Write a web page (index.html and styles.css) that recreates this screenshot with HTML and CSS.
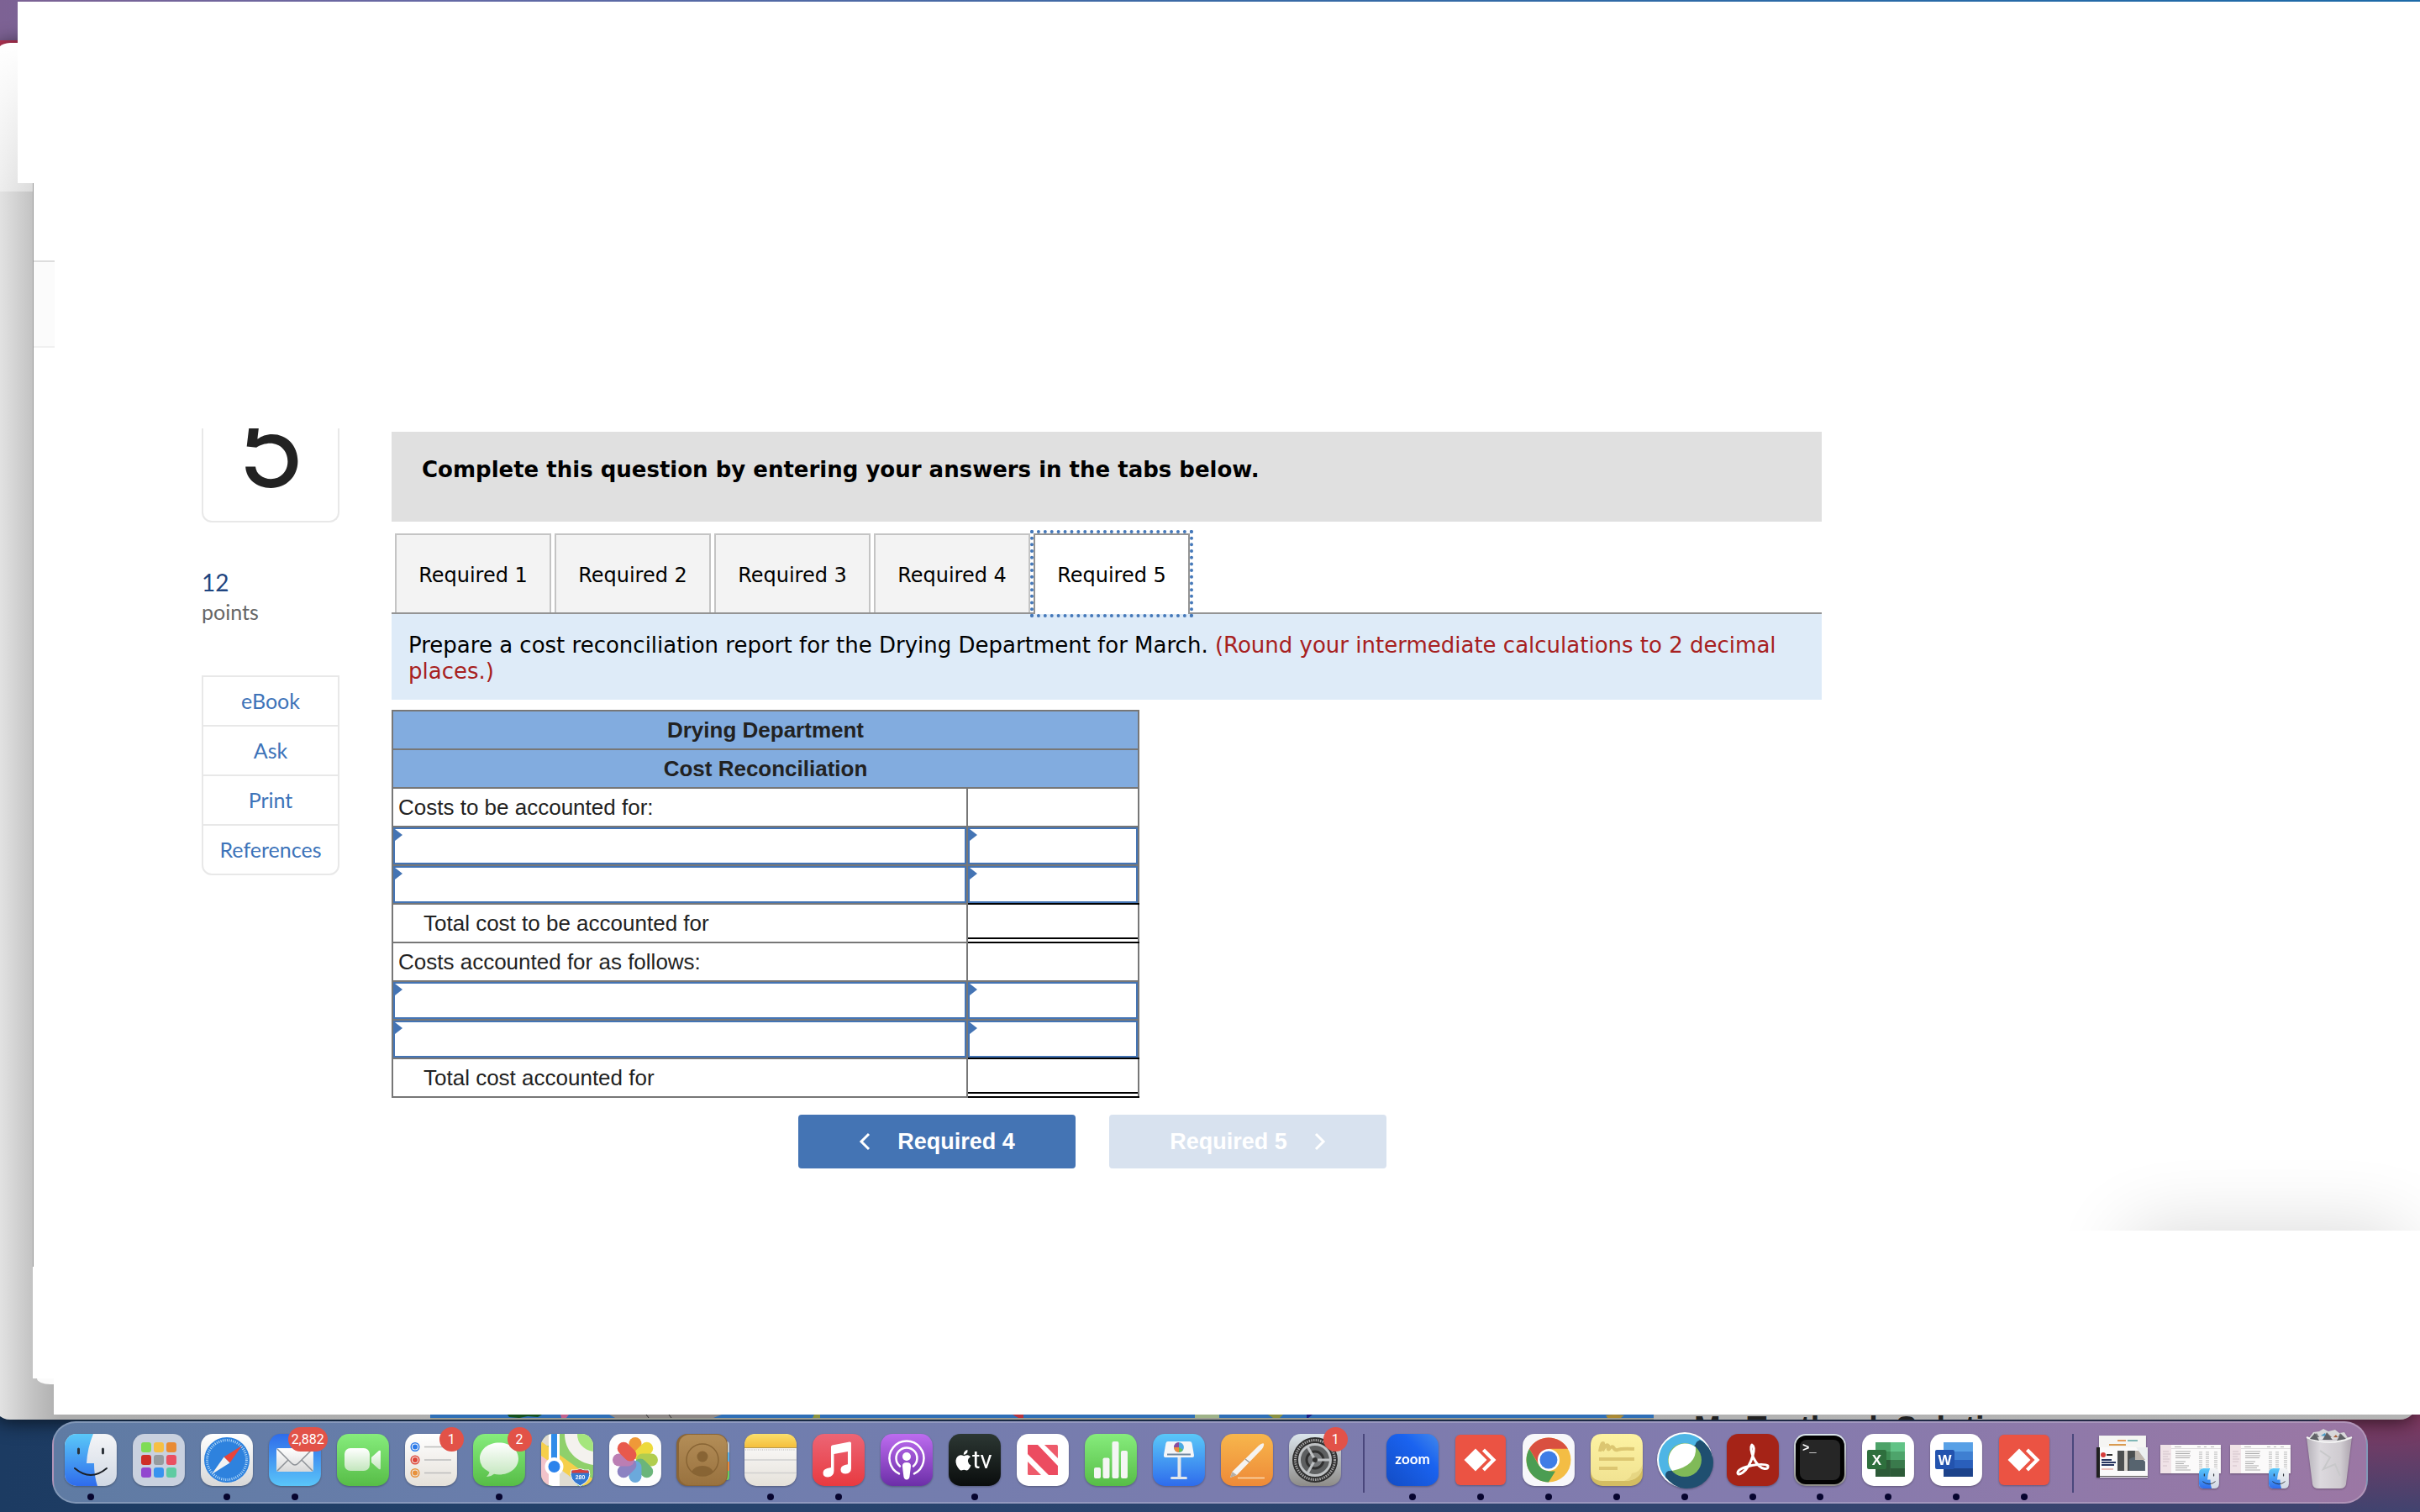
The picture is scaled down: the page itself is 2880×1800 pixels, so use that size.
FILE: index.html
```html
<!DOCTYPE html>
<html lang="en">
<head>
  <meta charset="UTF-8">
  <meta name="viewport" content="width=device-width, initial-scale=1.0">
  <title>Cost Reconciliation - Drying Department</title>
  <link rel="stylesheet" href="styles.css">
</head>
<body>
  <!-- shared gradients and icons -->
  <svg class="defs" width="0" height="0" aria-hidden="true">
    <defs>
      <linearGradient id="g-blue" x1="0" y1="0" x2="0" y2="1"><stop offset="0" stop-color="#5ac8f8"/><stop offset="1" stop-color="#2f6cec"/></linearGradient>
      <linearGradient id="g-mail" x1="0" y1="0" x2="0" y2="1"><stop offset="0" stop-color="#2f6cea"/><stop offset="1" stop-color="#5ac5f9"/></linearGradient>
      <linearGradient id="g-grey" x1="0" y1="0" x2="0" y2="1"><stop offset="0" stop-color="#f4f5f7"/><stop offset="1" stop-color="#d0d8e4"/></linearGradient>
      <linearGradient id="g-white" x1="0" y1="0" x2="0" y2="1"><stop offset="0" stop-color="#ffffff"/><stop offset="1" stop-color="#d8d8d8"/></linearGradient>
      <linearGradient id="g-green" x1="0" y1="0" x2="0" y2="1"><stop offset="0" stop-color="#86ec7c"/><stop offset="1" stop-color="#57bd47"/></linearGradient>
      <linearGradient id="g-bubble" x1="0" y1="0" x2="0" y2="1"><stop offset="0" stop-color="#ffffff"/><stop offset="1" stop-color="#c3e6bd"/></linearGradient>
      <linearGradient id="g-paper" x1="0" y1="0" x2="0" y2="1"><stop offset="0" stop-color="#ffffff"/><stop offset="1" stop-color="#e5e1da"/></linearGradient>
      <linearGradient id="g-yellow" x1="0" y1="0" x2="0" y2="1"><stop offset="0" stop-color="#fbdf6b"/><stop offset="1" stop-color="#f5bf3c"/></linearGradient>
      <linearGradient id="g-music" x1="0" y1="0" x2="0" y2="1"><stop offset="0" stop-color="#ec6575"/><stop offset="1" stop-color="#e83a40"/></linearGradient>
      <linearGradient id="g-pod" x1="0" y1="0" x2="0" y2="1"><stop offset="0" stop-color="#bd6cef"/><stop offset="1" stop-color="#6c2fa8"/></linearGradient>
      <linearGradient id="g-tv" x1="0" y1="0" x2="0" y2="1"><stop offset="0" stop-color="#2c3733"/><stop offset="1" stop-color="#0a0d0d"/></linearGradient>
      <linearGradient id="g-pages" x1="0" y1="0" x2="0" y2="1"><stop offset="0" stop-color="#f7b64c"/><stop offset="1" stop-color="#ee8a38"/></linearGradient>
      <linearGradient id="g-gear" x1="0" y1="0" x2="0" y2="1"><stop offset="0" stop-color="#dbe5ec"/><stop offset="1" stop-color="#8e8c89"/></linearGradient>
      <linearGradient id="g-zoom" x1="1" y1="0" x2="0" y2="1"><stop offset="0" stop-color="#4388ea"/><stop offset=".35" stop-color="#1a63f0"/><stop offset="1" stop-color="#124cc4"/></linearGradient>
      <linearGradient id="g-note" x1="0" y1="0" x2="0" y2="1"><stop offset="0" stop-color="#fdf2a2"/><stop offset="1" stop-color="#f1e392"/></linearGradient>
      <linearGradient id="g-book" x1="0" y1="0" x2="0" y2="1"><stop offset="0" stop-color="#b38d57"/><stop offset="1" stop-color="#99723f"/></linearGradient>
      <linearGradient id="g-can" x1="0" y1="0" x2="1" y2="0"><stop offset="0" stop-color="#bdbcc0"/><stop offset=".3" stop-color="#e8e8e9"/><stop offset=".75" stop-color="#dad9da"/><stop offset="1" stop-color="#b3adb4"/></linearGradient>
      <clipPath id="tile"><rect width="62" height="62" rx="14"/></clipPath>
    </defs>
    <symbol id="finder" viewBox="0 0 62 62">
      <g clip-path="url(#tile)">
        <rect width="62" height="62" fill="url(#g-grey)"/>
        <path d="M0 0H34Q27 17 26 35H35Q35 50 39 62H0Z" fill="url(#g-blue)"/>
      </g>
      <path d="M16.500 18v5M45.500 18v5" stroke="#2b3138" stroke-width="3" stroke-linecap="round"/>
      <path d="M12 41Q31 57 50 41" fill="none" stroke="#1b1f25" stroke-width="2" stroke-linecap="round"/>
    </symbol>
    <symbol id="anydesk" viewBox="0 0 62 62">
      <rect x="1" y="1" width="60" height="60" rx="6" fill="#eb5343"/>
      <path d="M11.500 31 25 17.500 38.500 31 25 44.500Z" fill="#fff"/>
      <path d="M33 20.500 36 17.500 49.500 31 36 44.500 33 41.500 43.500 31Z" fill="#fff"/>
    </symbol>
    <symbol id="listing" viewBox="0 0 72 34">
      <rect width="72" height="34" fill="#fbfafa"/>
      <rect width="13" height="34" fill="#f0e3e7"/>
      <path d="M3 8h7M3 11h9M3 14h6M3 17h8M3 20h7M3 25h5" stroke="#d3c3ca"/>
      <path d="M17 2.500h8M44 2.500h4M52 2.500h3M60 2.500h4" stroke="#b8b5b8"/>
      <path d="M13 4.500h59" stroke="#dedcdd"/>
      <path d="M18 8h18M18 10.500h17M18 13h18M18 15.500h17M18 20h12M18 22.500h10M18 25h16M18 27.500h14M18 30h18" stroke="#adadad"/>
      <path d="M48 8v23M56 8v23M66 8v23" stroke="#d0d0d0" stroke-width="4" stroke-dasharray="1.500 1"/>
    </symbol>
  </svg>

  <main class="screen">
    <div class="sheet-top"></div>

    <div class="sheet-body">
      <div class="toolbar-stub"></div>

      <div class="content">
        <aside class="side">
          <div class="question-number">5</div>
          <div class="points"><span class="points-value">12</span><span class="points-label">points</span></div>
          <nav class="side-menu">
            <a href="#ebook">eBook</a>
            <a href="#ask">Ask</a>
            <a href="#print">Print</a>
            <a href="#references">References</a>
          </nav>
        </aside>

        <section class="question">
          <h1 class="banner">Complete this question by entering your answers in the tabs below.</h1>

          <div class="tabs" role="tablist">
            <button class="tab" role="tab">Required 1</button>
            <button class="tab" role="tab">Required 2</button>
            <button class="tab" role="tab">Required 3</button>
            <button class="tab" role="tab">Required 4</button>
            <button class="tab active" role="tab" aria-selected="true">Required 5</button>
          </div>

          <p class="instruction">Prepare a cost reconciliation report for the Drying Department for March. <span class="hint">(Round your intermediate calculations to 2 decimal places.)</span></p>

          <table class="report">
            <thead>
              <tr><th colspan="2">Drying Department</th></tr>
              <tr><th colspan="2">Cost Reconciliation</th></tr>
            </thead>
            <tbody>
              <tr><td class="label">Costs to be accounted for:</td><td class="amount"></td></tr>
              <tr>
                <td class="entry"><input type="text" aria-label="Cost item 1"></td>
                <td class="entry"><input type="text" aria-label="Cost amount 1"></td>
              </tr>
              <tr>
                <td class="entry"><input type="text" aria-label="Cost item 2"></td>
                <td class="entry last"><input type="text" aria-label="Cost amount 2"></td>
              </tr>
              <tr><td class="label indent">Total cost to be accounted for</td><td class="amount total"></td></tr>
              <tr><td class="label">Costs accounted for as follows:</td><td class="amount"></td></tr>
              <tr>
                <td class="entry"><input type="text" aria-label="Accounted item 1"></td>
                <td class="entry"><input type="text" aria-label="Accounted amount 1"></td>
              </tr>
              <tr>
                <td class="entry"><input type="text" aria-label="Accounted item 2"></td>
                <td class="entry last"><input type="text" aria-label="Accounted amount 2"></td>
              </tr>
              <tr><td class="label indent">Total cost accounted for</td><td class="amount total"></td></tr>
            </tbody>
          </table>

          <div class="pager">
            <button class="pager-button">
              <svg width="14" height="22" viewBox="0 0 14 22"><path d="M12 2 3 11l9 9" fill="none" stroke="currentColor" stroke-width="3"/></svg>
              Required 4
            </button>
            <button class="pager-button" disabled>
              Required 5
              <svg width="14" height="22" viewBox="0 0 14 22"><path d="m2 2 9 9-9 9" fill="none" stroke="currentColor" stroke-width="3"/></svg>
            </button>
          </div>
        </section>
      </div>

      <div class="popup-shadow"></div>
    </div>

    <div class="sheet-rest"></div>
    <div class="sheet-foot"></div>

    <!-- last visible pixels of the window behind -->
    <div class="peek">
      <svg class="peek-art" viewBox="0 0 1456 6" preserveAspectRatio="none">
        <rect width="1456" height="6" fill="#2f6fb6"/>
        <path d="M92 0h41l-5 3-12-1-10 2-12-1Z" fill="#14501b"/>
        <path d="M155 0h10l-3 4h-6Z" fill="#c2618b"/>
        <path d="M213 0h134l-10 4H220Z" fill="#8d8886"/>
        <path d="M257 0l3 4M284 0l3 4" stroke="#333"/>
        <path d="M457 0h7v4h-9Z" fill="#8c9440"/>
        <path d="M693 0h13v4h-6Z" fill="#b9323c"/>
        <path d="M910 0h29v4h-29Z" fill="#9fb389"/>
        <path d="M997 0h18l-4 4h-8Z" fill="#8a9140"/>
        <path d="M1043 0h7l-5 4h-2Z" fill="#1b1f86"/>
        <path d="M1399 1q10-2 22 0l-4 3h-16Z" fill="#ac8a34"/>
        <rect y="4" width="1456" height="2" fill="#9b9c92"/>
      </svg>
      <span class="peek-text">My Textbook Solutions</span>
    </div>
  </main>

  <footer class="dock">
    <button class="app running" aria-label="Finder"><svg viewBox="0 0 62 62"><use href="#finder"/></svg></button>
    <button class="app" aria-label="Launchpad">
      <svg viewBox="0 0 62 62">
        <rect width="62" height="62" rx="14" fill="#c9d1df"/>
        <g>
          <rect x="10" y="10" width="12" height="12" rx="3" fill="#7fdc55"/><rect x="25" y="10" width="12" height="12" rx="3" fill="#f6c044"/><rect x="40" y="10" width="12" height="12" rx="3" fill="#e98b34"/>
          <rect x="10" y="25" width="12" height="12" rx="3" fill="#cf2f27"/><rect x="25" y="25" width="12" height="12" rx="3" fill="#959b9f"/><rect x="40" y="25" width="12" height="12" rx="3" fill="#ea4f61"/>
          <rect x="10" y="40" width="12" height="12" rx="3" fill="#9247cf"/><rect x="25" y="40" width="12" height="12" rx="3" fill="#3893ef"/><rect x="40" y="40" width="12" height="12" rx="3" fill="#5fcba2"/>
        </g>
      </svg>
    </button>
    <button class="app running" aria-label="Safari">
      <svg viewBox="0 0 62 62">
        <rect width="62" height="62" rx="14" fill="url(#g-white)"/>
        <circle cx="31" cy="31" r="27" fill="#2e82de"/>
        <circle cx="31" cy="31" r="23.500" fill="none" stroke="#b9dcf8" stroke-width="3" stroke-dasharray="1 1.500"/>
        <path d="M49 14 34.500 34.500 27.500 27.500Z" fill="#e8443a"/>
        <path d="M13 48 27.500 27.500 34.500 34.500Z" fill="#f3f3f3"/>
      </svg>
    </button>
    <button class="app running" aria-label="Mail">
      <svg viewBox="0 0 62 62">
        <rect width="62" height="62" rx="14" fill="url(#g-mail)"/>
        <rect x="9" y="17" width="44" height="28" rx="2" fill="url(#g-white)"/>
        <path d="m10 18 17 17q4 4 8 0l17-17M10 44l13-13M52 44 39 31" fill="none" stroke="#8d9196" stroke-width="1.500"/>
      </svg>
      <span class="badge">2,882</span>
    </button>
    <button class="app" aria-label="FaceTime">
      <svg viewBox="0 0 62 62">
        <rect width="62" height="62" rx="14" fill="url(#g-green)"/>
        <rect x="9" y="17" width="30" height="27" rx="7" fill="url(#g-bubble)"/>
        <path d="m41 28 9-8q2-1 2 1v20q0 2-2 1l-9-8Z" fill="url(#g-bubble)"/>
      </svg>
    </button>
    <button class="app" aria-label="Reminders">
      <svg viewBox="0 0 62 62">
        <rect width="62" height="62" rx="14" fill="url(#g-paper)"/>
        <g stroke-width="1.500">
          <circle cx="12" cy="15.500" r="4.800" fill="none" stroke="#2c7bea"/><circle cx="12" cy="15.500" r="3" fill="#2c7bea"/>
          <circle cx="12" cy="31" r="4.800" fill="none" stroke="#de4438"/><circle cx="12" cy="31" r="3" fill="#de4438"/>
          <circle cx="12" cy="46.500" r="4.800" fill="none" stroke="#e8913a"/><circle cx="12" cy="46.500" r="3" fill="#e8913a"/>
        </g>
        <path d="M23 15.500h32M23 31h32M23 46.500h32" stroke="#bdbdbd" stroke-width="1.500"/>
      </svg>
      <span class="badge">1</span>
    </button>
    <button class="app running" aria-label="Messages">
      <svg viewBox="0 0 62 62">
        <rect width="62" height="62" rx="14" fill="url(#g-green)"/>
        <path d="M31 10.500c13 0 23 8 23 19s-10 19-23 19q-3 0-6-.700-4 3.500-9 3.200 3-2.500 3.500-5.500Q8 40 8 29.500c0-11 10-19 23-19Z" fill="url(#g-bubble)"/>
      </svg>
      <span class="badge">2</span>
    </button>
    <button class="app" aria-label="Maps">
      <svg viewBox="0 0 62 62">
        <g clip-path="url(#tile)">
          <rect width="62" height="62" fill="#8fd06b"/>
          <rect width="9" height="14" fill="#dedad2"/>
          <path d="M0 26h10v36H0Z" fill="#f2c3ca"/>
          <path d="M22 36 44 62H22Z" fill="#dfdcd2"/>
          <path d="m0 9 62 45v12h-6L0 26Z" fill="#f6cf4b"/>
          <path d="M28 0h34v37C42 34 28 20 28 0Z" fill="#f4f2ee"/>
          <path d="M43 0h19v21C50 19 43 11 43 0Z" fill="#a5e67d"/>
          <path d="M9 0h13v62H9Z" fill="#fff"/>
          <path d="M12 0h7v38h-7Z" fill="#2f8ce9"/>
        </g>
        <circle cx="15.500" cy="39" r="9" fill="#2b83ec" stroke="#fff" stroke-width="4"/>
        <path d="M36 43q5 1 10.500-1.500Q52 44 57 43q4 12-10.500 19Q32 55 36 43Z" fill="#3578d0" stroke="#fff" stroke-width="1"/>
        <path d="M37 43.500q5 0 9.500-1.500 5 2 9.500 1.500l1 3H36Z" fill="#d9403c"/>
        <text x="46.500" y="54" text-anchor="middle" class="icon-shield">280</text>
      </svg>
    </button>
    <button class="app" aria-label="Photos">
      <svg viewBox="0 0 62 62">
        <rect width="62" height="62" rx="14" fill="#fdfdfd"/>
        <g class="petals">
          <rect x="23.500" y="4" width="15" height="26" rx="7.500" fill="#f19a38"/>
          <rect x="23.500" y="4" width="15" height="26" rx="7.500" fill="#efdc3c" transform="rotate(45 31 31)"/>
          <rect x="23.500" y="4" width="15" height="26" rx="7.500" fill="#b3cf4f" transform="rotate(90 31 31)"/>
          <rect x="23.500" y="4" width="15" height="26" rx="7.500" fill="#6cb77b" transform="rotate(135 31 31)"/>
          <rect x="23.500" y="4" width="15" height="26" rx="7.500" fill="#6cabdd" transform="rotate(180 31 31)"/>
          <rect x="23.500" y="4" width="15" height="26" rx="7.500" fill="#8d83c4" transform="rotate(225 31 31)"/>
          <rect x="23.500" y="4" width="15" height="26" rx="7.500" fill="#bd7fb5" transform="rotate(270 31 31)"/>
          <rect x="23.500" y="4" width="15" height="26" rx="7.500" fill="#ea5a4c" transform="rotate(315 31 31)"/>
        </g>
      </svg>
    </button>
    <button class="app" aria-label="Contacts">
      <svg viewBox="0 0 62 62">
        <path d="M58 9h3q2 1 2 4v10h-5Z" fill="#c7cdd0"/><path d="M58 22h5v11h-5Z" fill="#56b3ec"/><path d="M58 33h5v11h-5Z" fill="#ef8c37"/><path d="M58 44h5v8q0 3-3 3h-2Z" fill="#6dd05c"/>
        <rect width="61" height="62" rx="13" fill="#8a6536"/>
        <rect x="3" y="1" width="57" height="60" rx="12" fill="url(#g-book)"/>
        <circle cx="31" cy="31" r="19" fill="none" stroke="#886434" stroke-width="1.500"/>
        <circle cx="31" cy="27" r="6.500" fill="#886434"/>
        <path d="M18 45q4-7 13-7t13 7q-5 5-13 5t-13-5Z" fill="#886434"/>
      </svg>
    </button>
    <button class="app running" aria-label="Notes">
      <svg viewBox="0 0 62 62">
        <rect width="62" height="62" rx="14" fill="url(#g-paper)"/>
        <path d="M0 16V14Q0 0 14 0h34q14 0 14 14v2Z" fill="url(#g-yellow)"/>
        <path d="M0 16.500h62" stroke="#b79a50"/>
        <path d="M1 19h60" stroke="#b4b4b4" stroke-dasharray="1 1.500"/>
        <path d="M0 31h62M0 46.500h62" stroke="#cfcfcf" stroke-width="1.500"/>
      </svg>
    </button>
    <button class="app running" aria-label="Music">
      <svg viewBox="0 0 62 62">
        <rect width="62" height="62" rx="14" fill="url(#g-music)"/>
        <path d="M22 15.500q0-1.500 1.500-2L44 9.500q2-.300 2 1.500v30q0 6-6.500 6.500-6 0-6-5 0-4 5-5.500l3.500-.800V21L25.500 24v20q0 6.500-7 7.500-6 0-6-5 0-4 5-5.500l4.500-1Z" fill="#fff"/>
      </svg>
    </button>
    <button class="app" aria-label="Podcasts">
      <svg viewBox="0 0 62 62">
        <rect width="62" height="62" rx="14" fill="url(#g-pod)"/>
        <g fill="none" stroke="#fff" stroke-width="2.500" stroke-linecap="round">
          <path d="M22 47.500a20.500 20.500 0 1 1 18 0"/>
          <path d="M23 38.500a12.500 12.500 0 1 1 16 0"/>
        </g>
        <circle cx="31" cy="27" r="5" fill="#fff"/>
        <path d="M31 34q5.500 0 5 5l-1.500 12q-.500 3.500-3.500 3.500t-3.500-3.500L26 39q-.500-5 5-5Z" fill="#fff"/>
      </svg>
    </button>
    <button class="app running" aria-label="TV">
      <svg viewBox="0 0 62 62">
        <rect width="62" height="62" rx="14" fill="url(#g-tv)"/>
        <path d="M22.500 19q.500 3-1.500 4.500-1.500 1.500-3.300 1.300 0-2.500 1.500-4 1.500-1.600 3.300-1.800ZM26 27.500q-3.500 2-3 5.500.500 3 3.500 4.500-1 3-3 5-1.500 1.500-3 .800-2.300-1-4.600 0-1.600.700-3-.800-5-5.500-4.400-11Q9.500 26 14 25.200q1.500-.200 4.300 1 2.500-1.200 4.500-1 2 .300 3.200 2.300Z" fill="#fff"/>
        <text x="28" y="41" class="icon-tv">tv</text>
      </svg>
    </button>
    <button class="app" aria-label="News">
      <svg viewBox="0 0 62 62">
        <rect width="62" height="62" rx="14" fill="#fff"/>
        <path d="M13 13h12L49 38v11H38L13 24Z" fill="#ec4c60"/>
        <path d="M33 13h14.500q1.500 0 1.500 1.500V29Z" fill="#ee5b6b"/>
        <path d="M13 33v14.500q0 1.500 1.500 1.500H29Z" fill="#ee5b6b"/>
      </svg>
    </button>
    <button class="app" aria-label="Numbers">
      <svg viewBox="0 0 62 62">
        <rect width="62" height="62" rx="14" fill="url(#g-green)"/>
        <g fill="#f4f6f4"><rect x="11" y="40" width="8" height="13" rx="2"/><rect x="21.500" y="28.500" width="8" height="24.500" rx="2"/><rect x="32.500" y="9" width="8" height="44" rx="2"/><rect x="43" y="20" width="8" height="33" rx="2"/></g>
      </svg>
    </button>
    <button class="app" aria-label="Keynote">
      <svg viewBox="0 0 62 62">
        <rect width="62" height="62" rx="14" fill="url(#g-blue)"/>
        <rect x="29.500" y="28" width="4" height="24" fill="#e2e6ea"/>
        <path d="M18 9h26q2 0 2.500 2L49 25q.400 3-2 3H15q-2.500 0-2-3l2.500-14q.500-2 2.500-2Z" fill="#f5f6f8"/>
        <path d="M17 24.500h28" stroke="#70879f" stroke-width="2"/>
        <circle cx="31" cy="16" r="6" fill="#4aaae4"/><path d="M31 16v-6a6 6 0 0 0-6 6Z" fill="#8e4b9c"/><path d="M31 16h-6a6 6 0 0 0 6 6Z" fill="#ec8b3a"/><path d="M31 16v6a6 6 0 0 0 5-3Z" fill="#67bd58"/>
        <rect x="21" y="51" width="20" height="3" rx="1.500" fill="#e2e6ea"/>
      </svg>
    </button>
    <button class="app" aria-label="Pages">
      <svg viewBox="0 0 62 62">
        <rect width="62" height="62" rx="14" fill="url(#g-pages)"/>
        <path d="M11 52 13.500 45 45 14q4-3.500 6-2.500 1 2-2 6.500L19 49Z" fill="#f5f3f0"/>
        <path d="m29 30 5 4" stroke="#a09b95" stroke-width="1.500"/>
        <path d="m11 52 2.500-7 5.500 4Z" fill="#b7aea4"/>
        <path d="M20 52.500h32" stroke="#fbd9af" stroke-width="1.500"/>
      </svg>
    </button>
    <button class="app" aria-label="System Preferences">
      <svg viewBox="0 0 62 62">
        <rect width="62" height="62" rx="14" fill="url(#g-gear)"/>
        <circle cx="31" cy="31" r="27" fill="#303030"/>
        <circle cx="31" cy="31" r="23.500" fill="none" stroke="#a5a5a5" stroke-width="3" stroke-dasharray="1.500 1.200"/>
        <circle cx="31" cy="31" r="18.500" fill="#5d5f60" stroke="#bfc2c4" stroke-width="3"/>
        <circle cx="31" cy="31" r="10" fill="#747678" stroke="#303030" stroke-width="3"/>
        <path d="M31 31h18M31 31 22 15M31 31l-9 16" stroke="#bfc2c4" stroke-width="3"/>
        <circle cx="31" cy="31" r="3" fill="#303030"/>
      </svg>
      <span class="badge">1</span>
    </button>

    <span class="divider"></span>

    <button class="app running" aria-label="Zoom">
      <svg viewBox="0 0 62 62"><rect width="62" height="62" rx="14" fill="url(#g-zoom)"/><text x="31" y="36" text-anchor="middle" class="icon-zoom">zoom</text></svg>
    </button>
    <button class="app running" aria-label="AnyDesk"><svg viewBox="0 0 62 62"><use href="#anydesk"/></svg></button>
    <button class="app running" aria-label="Chrome">
      <svg viewBox="0 0 62 62">
        <rect width="62" height="62" rx="14" fill="#f7f7fa"/>
        <circle cx="31" cy="31" r="26.500" fill="#f4bd44"/>
        <path d="M8 17.800A26.500 26.500 0 0 1 54 17.800H31L20 37.500Z" fill="#d95040"/>
        <path d="M8 17.800 19.500 37.500 31 44.500H39L31 57.500A26.500 26.500 0 0 1 8 17.800Z" fill="#4b9d52"/>
        <circle cx="31" cy="31" r="13" fill="#fff"/>
        <circle cx="31" cy="31" r="10.500" fill="#3f7de6"/>
      </svg>
    </button>
    <button class="app running" aria-label="Stickies">
      <svg viewBox="0 0 62 62">
        <rect y="4" width="62" height="58" rx="14" fill="#d3bd62"/>
        <path d="M14 0h34q14 0 14 14v24q-2 18-22 18H14Q0 56 0 42V14Q0 0 14 0Z" fill="url(#g-note)"/>
        <path d="M62 36v3q-3 17-22 17 8-3 9-9 10-1 13-11Z" fill="#e6d683"/>
        <path d="M11 21q2-11 4-10 1 2-1 9 5-9 7-6-1 6 1 4 3-4 5-2 2 4 5 3 5-2 20-1M10 30h42M10 41h22" fill="none" stroke="#dcc671" stroke-width="4"/>
      </svg>
    </button>
    <button class="app running" aria-label="Webex">
      <svg viewBox="0 0 62 62">
        <circle cx="31" cy="31" r="33" fill="#fff"/>
        <circle cx="31" cy="31" r="31" fill="#4eb5e5"/>
        <path d="M49 7a31 31 0 1 1-41 44Z" fill="#1f4f70"/>
        <circle cx="49" cy="13" r="5" fill="#1f4f70"/><circle cx="13" cy="49" r="5" fill="#1f4f70"/>
        <circle cx="31" cy="31" r="20" fill="#80ba58"/>
        <path d="M44 15.800Q46 38 16 44A20 20 0 0 1 44 15.800Z" fill="#fff"/>
      </svg>
    </button>
    <button class="app running" aria-label="Acrobat">
      <svg viewBox="0 0 62 62">
        <rect width="62" height="62" rx="14" fill="#a52317"/>
        <path d="M30 13q4 2 1 13-4 14-12 20-6 4-6 0 1-5 17-8.500 15-2.500 19 .500 1 4-4 3.500-7-1-13-12.500-5-12-2-16Z" fill="none" stroke="#fff" stroke-width="3" stroke-linejoin="round"/>
      </svg>
    </button>
    <button class="app running" aria-label="Terminal">
      <svg viewBox="0 0 62 62">
        <rect width="62" height="62" rx="14" fill="url(#g-gear)"/>
        <rect x="2" y="2" width="58" height="58" rx="12" fill="#020202"/>
        <rect x="7" y="7" width="48" height="48" rx="8" fill="#262626"/>
        <text x="10" y="21" class="icon-term">&gt;_</text>
      </svg>
    </button>
    <button class="app running" aria-label="Excel">
      <svg viewBox="0 0 62 62">
        <rect width="62" height="62" rx="14" fill="#fff"/>
        <path d="M16 10h18v11H16Z" fill="#4da268"/><path d="M34 10h17v11H34Z" fill="#62c387"/>
        <path d="M16 21h18v10H16Z" fill="#3c8b52"/><path d="M34 21h17v10H34Z" fill="#4ea46b"/>
        <path d="M16 31h18v20H16Z" fill="#2d5b38"/><path d="M34 31h17v10H34Z" fill="#3a7a4c"/><path d="M34 41h17v10H34Z" fill="#2d5b38"/>
        <rect x="6" y="19" width="23" height="23" rx="2" fill="#2e6f3d"/>
        <text x="17.500" y="37" text-anchor="middle" class="icon-office">X</text>
      </svg>
    </button>
    <button class="app running" aria-label="Word">
      <svg viewBox="0 0 62 62">
        <rect width="62" height="62" rx="14" fill="#fff"/>
        <path d="M16 10h35v11H16Z" fill="#58a0e6"/><path d="M16 21h35v10H16Z" fill="#3f7fd1"/>
        <path d="M16 31h35v10H16Z" fill="#2a5fbb"/><path d="M16 41h35v10H16Z" fill="#1d438b"/>
        <rect x="6" y="19" width="23" height="23" rx="2" fill="#2353ae"/>
        <text x="17.500" y="37" text-anchor="middle" class="icon-office">W</text>
      </svg>
    </button>
    <button class="app running" aria-label="AnyDesk"><svg viewBox="0 0 62 62"><use href="#anydesk"/></svg></button>

    <span class="divider"></span>

    <button class="app" aria-label="Downloads">
      <svg viewBox="0 0 62 62">
        <rect x="4" y="2" width="56" height="24" fill="#f5f5f3"/>
        <path d="M26 8h10" stroke="#e59c5a" stroke-width="2"/><path d="M38 8h12" stroke="#7fb7b6" stroke-width="2"/><path d="M16 13h20" stroke="#d89a50" stroke-width="2"/>
        <rect x="1" y="16" width="61" height="36" fill="#fafafa"/>
        <rect x="1" y="16" width="4" height="36" fill="#202020"/>
        <rect x="26" y="20" width="21" height="24" fill="#4c4f50"/><path d="M34 20h4v24h-4Z" fill="#d9d5cf"/><path d="M40 30q10-6 19 3v11H40Z" fill="#57646f"/><rect x="47" y="20" width="12" height="11" fill="#bdb5ad"/>
        <circle cx="9" cy="25" r="3" fill="#d63c3a"/><path d="M13 25h7" stroke="#333" stroke-width="2"/>
        <path d="M7 31h12M7 34h17M7 37h15" stroke="#27355f" stroke-width="2"/><path d="M7 42h14" stroke="#dc8478"/>
        <path d="M5 50.500h57" stroke="#555"/>
        <path d="m48 16 14 19V16Z" fill="#eceff0"/>
      </svg>
    </button>
    <button class="app wide" aria-label="Minimized Finder window">
      <svg viewBox="0 0 72 62"><use href="#listing" y="13" width="72" height="34"/><use href="#finder" x="46" y="41" width="24" height="24"/></svg>
    </button>
    <button class="app wide" aria-label="Minimized Finder window">
      <svg viewBox="0 0 72 62"><use href="#listing" y="13" width="72" height="34"/><use href="#finder" x="46" y="41" width="24" height="24"/></svg>
    </button>
    <button class="app" aria-label="Trash">
      <svg viewBox="0 0 62 62">
        <path d="M6 6 12-2l7-1 5-3 6 3 8-2 5 4 6-1 5 8Z" fill="#d8d8da"/>
        <path d="m10 7 6-8 5 8ZM25 5l3-7 6 6ZM40 7l4-8 5 7Z" fill="#77787c"/><path d="m21 2 5-3 2 4Z" fill="#4a9ac4"/><path d="m35 5 4-4 3 4Z" fill="#a8643f"/>
        <path d="M4 4h54l-7 56q-1 5-7 5H18q-6 0-7-5Z" fill="url(#g-can)" opacity=".9"/>
        <path d="M4 4q27 12 54 0" fill="none" stroke="#f2f2f2" stroke-width="2"/>
        <path d="m8 6 6-7 5 9ZM23 7l5-8 7 8ZM40 8l5-8 6 6Z" fill="#5f6166"/>
        <path d="m20 20 12 8-8 14 14-6 6 14" fill="none" stroke="#c8c8ca" stroke-width="2"/>
      </svg>
    </button>
  </footer>
</body>
</html>
```
FILE: styles.css
```css
* {
  margin: 0;
  padding: 0;
  box-sizing: border-box;
}

body {
  display: flex;
  flex-direction: column;
  min-height: 100vh;
  overflow: hidden;
  font-family: "Liberation Sans", Arial, sans-serif;
  color: #222;
  background:
    linear-gradient(to right, #7d6294, #6569a5 18%, #3a6aa6 50%, #1d6aa8) top / 100% 48px no-repeat,
    linear-gradient(to right, #c6385c, #a53d63) 0 48px / 100% 20px no-repeat,
    linear-gradient(to bottom, rgba(138, 56, 96, 0.9), rgba(138, 56, 96, 0)) right bottom / 120px 116px no-repeat,
    linear-gradient(to right, #1c3b62, #26436d 30%, #30446f 70%, #41436f);
}

button {
  font: inherit;
  border: none;
  background: none;
  cursor: pointer;
}

.defs {
  position: absolute;
}

/* Window stack */
.screen {
  position: relative;
  flex: 1;
  padding-top: 2px;
}

/* window at the very back, only its edges show */
.screen::before {
  content: "";
  position: absolute;
  top: 51px;
  right: 4px;
  bottom: 0;
  left: -8px;
  border-radius: 20px;
  background:
    linear-gradient(to bottom, #fff, rgba(255, 255, 255, 0.4) 177px, transparent 177px),
    linear-gradient(to right, #e8e8e8, #c2c2c2 48px, #adadad 80px, #b4b4b4);
  box-shadow: 0 2px 24px rgba(0, 0, 0, 0.7);
}

.sheet-top,
.sheet-body,
.sheet-rest,
.sheet-foot,
.peek {
  position: relative;
}

.sheet-top {
  height: 216px;
  margin-left: 21px;
  background: #fff;
}

.sheet-body {
  margin-left: 39px;
  padding: 92px 0 117px;
  border-left: 1px solid #999;
  background: #fff;
}

.sheet-rest {
  height: 133px;
  margin-left: 39px;
  background: #fff;
}

.sheet-foot {
  height: 43px;
  margin-left: 64px;
  background: #fff;
}

.sheet-foot::before {
  content: "";
  position: absolute;
  top: 0;
  left: -20px;
  width: 20px;
  height: 7px;
  border-bottom-left-radius: 16px 7px;
  background: #fbfbfb;
}

.toolbar-stub {
  width: 25px;
  height: 104px;
  border-top: 2px solid #ddd;
  border-bottom: 2px solid #f0f0f0;
  background: #fbfbfb;
}

.popup-shadow {
  position: absolute;
  right: 0;
  bottom: 43px;
  width: 480px;
  height: 100px;
  overflow: hidden;
}

.popup-shadow::before {
  content: "";
  position: absolute;
  top: 100px;
  right: 16px;
  width: 330px;
  height: 200px;
  border-radius: 20px;
  box-shadow: 0 0 90px rgba(0, 0, 0, 0.16);
}

.peek {
  display: flex;
  height: 6px;
  overflow: hidden;
  padding-left: 512px;
}

.peek-art {
  width: 1456px;
  height: 6px;
}

.peek-text {
  margin-left: 48px;
  font-size: 38px;
  font-weight: bold;
  line-height: 32px;
}

/* Question page */
.content {
  display: flex;
  gap: 62px;
  margin-top: 96px;
  padding: 0 712px 0 200px;
}

.side {
  width: 164px;
  font-family: Lato, sans-serif;
}

.question-number {
  display: flex;
  align-items: flex-end;
  justify-content: center;
  height: 112px;
  padding-bottom: 8px;
  overflow: hidden;
  border: 2px solid #e8e8e8;
  border-top: none;
  border-radius: 0 0 12px 12px;
  font-family: Inter, sans-serif;
  font-size: 132px;
  line-height: 160px;
}

.points {
  display: flex;
  flex-direction: column;
  padding: 54px 0 58px;
}

.points-value {
  font-size: 28px;
  line-height: 34px;
  color: #1f4580;
}

.points-label {
  font-size: 25px;
  line-height: 36px;
  color: #666;
}

.side-menu {
  border: 2px solid #e8e8e8;
  border-radius: 0 0 12px 12px;
}

.side-menu a {
  display: block;
  font-size: 25px;
  line-height: 57px;
  text-align: center;
  text-decoration: none;
  color: #3d73b9;
}

.side-menu a + a {
  border-top: 2px solid #e8e8e8;
}

.question {
  flex: 1;
  padding-top: 4px;
}

.banner {
  height: 107px;
  padding: 29px 36px;
  font-family: "DejaVu Sans", Verdana, sans-serif;
  font-size: 26px;
  line-height: 32px;
  color: #000;
  background: #e0e0e0;
}

.tabs {
  display: flex;
  gap: 4px;
  margin-top: 14px;
  padding-left: 4px;
  border-bottom: 2px solid #949494;
}

.tab {
  width: 186px;
  height: 94px;
  padding-top: 3px;
  border: 2px solid #c4c4c4;
  border-bottom: none;
  font-family: "DejaVu Sans", Verdana, sans-serif;
  font-size: 24px;
  color: #000;
  background: #f3f3f3;
}

.tab.active {
  height: 96px;
  margin-bottom: -2px;
  padding-top: 1px;
  border-color: #949494;
  background: #fff;
  outline: 4px dotted #4578b9;
}

.instruction {
  padding: 22px 20px 18px;
  font-family: "DejaVu Sans", Verdana, sans-serif;
  font-size: 26px;
  line-height: 31px;
  color: #000;
  background: #deebf8;
}

.hint {
  color: #a72020;
}

.report {
  width: 890px;
  margin-top: 12px;
  border-collapse: collapse;
  font-size: 26px;
  line-height: 30px;
  background: #fff;
}

.report th,
.report td {
  height: 46px;
  border: 2px solid #777;
}

.report th {
  background: #82acdf;
}

.label {
  width: 684px;
  padding-left: 6px;
}

.label.indent {
  padding-left: 36px;
}

/* single rule above, double rule below */
.report .last {
  border-bottom-color: #000;
}

.report .total {
  border-bottom-color: #000;
  box-shadow: inset 0 -3px #fff, inset 0 -5px #000;
}

.entry {
  position: relative;
}

.entry::before {
  content: "";
  position: absolute;
  top: 2px;
  left: 2px;
  border: 7px solid transparent;
  border-right-width: 0;
  border-left: 9px solid #4474b4;
}

.entry input {
  display: block;
  width: 100%;
  height: 44px;
  padding: 0 12px;
  border: 2px solid #4474b4;
  font: inherit;
}

.pager {
  display: flex;
  gap: 40px;
  margin-top: 20px;
  padding-left: 484px;
}

.pager-button {
  display: flex;
  align-items: center;
  justify-content: center;
  gap: 32px;
  width: 330px;
  height: 64px;
  border-radius: 4px;
  font-size: 27px;
  font-weight: bold;
  color: #fff;
  background: #4474b4;
}

.pager-button:disabled {
  background: #d8e2ef;
}

/* Dock */
.dock {
  position: relative;
  display: flex;
  gap: 19px;
  height: 98px;
  margin: 2px 62px 10px;
  padding: 13px;
  border: 2px solid rgba(255, 255, 255, 0.22);
  border-radius: 28px;
  background: linear-gradient(to right, #5f7ba3, #6d7eae 25%, #7a7cae 50%, #847bae 75%, #9b77a4);
}

.app {
  position: relative;
  width: 62px;
  height: 62px;
}

.app.wide {
  width: 72px;
  margin: 0 -4px;
}

.app svg {
  display: block;
  width: 100%;
  height: 100%;
  overflow: visible;
  filter: drop-shadow(0 1px 1px rgba(0, 0, 0, 0.3));
}

.app.running::after {
  content: "";
  position: absolute;
  bottom: -17px;
  left: 27px;
  width: 8px;
  height: 8px;
  border-radius: 50%;
  background: #07052f;
}

.badge {
  position: absolute;
  top: -8px;
  right: -8px;
  min-width: 29px;
  padding: 0 4px;
  border-radius: 15px;
  font-family: Roboto, sans-serif;
  font-size: 16px;
  line-height: 29px;
  text-align: center;
  color: #fff;
  background: #e25248;
}

.divider {
  width: 2px;
  height: 70px;
  margin: 0 7px;
  background: #4a477c;
}

.petals {
  mix-blend-mode: multiply;
}

.icon-shield {
  font: bold 7px "Liberation Sans", sans-serif;
  fill: #fff;
}

.icon-tv {
  font: 29px Roboto, sans-serif;
  fill: #fff;
}

.icon-zoom {
  font: bold 17px Lato, sans-serif;
  fill: #fff;
}

.icon-term {
  font: bold 14px "Liberation Mono", monospace;
  fill: #fff;
}

.icon-office {
  font: bold 17px "Liberation Sans", sans-serif;
  fill: #fff;
}
```
